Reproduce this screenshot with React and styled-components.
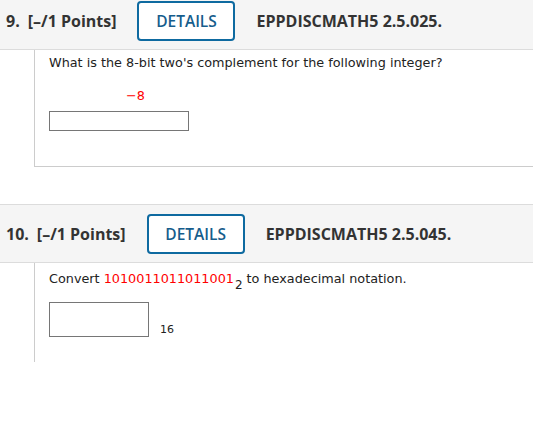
import React from "react";
import styled, { createGlobalStyle } from "styled-components";

const GlobalStyle = createGlobalStyle`
  html, body {
    margin: 0;
    padding: 0;
    background: #fff;
  }
  body {
    font-family: "DejaVu Sans", Verdana, sans-serif;
    color: #222;
  }
`;

const QUESTIONS = [
  {
    number: "9.",
    code: "EPPDISCMATH5 2.5.025.",
    kind: "twos",
  },
  {
    number: "10.",
    code: "EPPDISCMATH5 2.5.045.",
    kind: "hex",
  },
];

export default function App() {
  return (
    <>
      <GlobalStyle />
      <Page>
        {QUESTIONS.map((q, i) => (
          <Question key={q.number} $first={i === 0}>
            <Header>
              <Number>{q.number}</Number>
              <Points>[–/1 Points]</Points>
              <DetailsButton type="button">DETAILS</DetailsButton>
              <Code>{q.code}</Code>
            </Header>
            {q.kind === "twos" ? (
              <Body $bordered $top={5} $bottom={35}>
                <Prompt>What is the 8-bit two's complement for the following integer?</Prompt>
                <Given>−8</Given>
                <WideInput type="text" />
              </Body>
            ) : (
              <Body $top={8} $bottom={25}>
                <Prompt>
                  Convert <Red>1010011011011001</Red>
                  <Sub>2</Sub>to hexadecimal notation.
                </Prompt>
                <AnswerRow>
                  <BoxInput type="text" />
                  <Base>16</Base>
                </AnswerRow>
              </Body>
            )}
          </Question>
        ))}
      </Page>
    </>
  );
}

const Page = styled.div`
  margin-top: -9px;
`;

const Question = styled.section`
  margin-top: ${(p) => (p.$first ? "0" : "37px")};
`;

const Header = styled.div`
  display: flex;
  align-items: center;
  height: 57px;
  padding: 0 5px;
  background: #f5f5f5;
  border-top: 1px solid #dcdcdc;
  border-bottom: 1px solid #dcdcdc;
  font-family: "Open Sans", sans-serif;
  font-weight: 700;
  font-size: 16px;
  color: #333;
  box-sizing: content-box;
`;

const Number = styled.span`
  margin-left: 1px;
  margin-right: 8px;
`;

const Points = styled.span`
  margin-right: 21px;
`;

const DetailsButton = styled.button`
  width: 98px;
  height: 40px;
  border: 2px solid #0e6aa0;
  border-radius: 4px;
  background: #fff;
  color: #165d8c;
  font-family: "Open Sans", sans-serif;
  font-weight: 600;
  font-size: 15.5px;
  padding: 0;
  margin-right: 21px;
`;

const Code = styled.span`
  color: #333;
`;

const Body = styled.div`
  margin-left: 34px;
  border-left: 1px solid #cccccc;
  border-bottom: ${(p) => (p.$bordered ? "1px solid #cccccc" : "none")};
  padding: ${(p) => p.$top}px 0 ${(p) => p.$bottom}px 14px;
  font-size: 12.8px;
`;

const Prompt = styled.div`
  line-height: 16px;
`;

const Red = styled.span`
  color: #f00;
`;

const Sub = styled.sub`
  font-size: 12px;
  line-height: 0;
  margin: 0 4px 0 1px;
  vertical-align: -6px;
`;

const Given = styled.div`
  color: #f00;
  padding-left: 77px;
  margin-top: 17px;
  line-height: 16px;
`;

const WideInput = styled.input`
  display: block;
  width: 140px;
  height: 20px;
  margin-top: 7px;
  box-sizing: border-box;
  border: 1px solid #767676;
  border-radius: 0;
  padding: 0;
`;

const AnswerRow = styled.div`
  display: flex;
  align-items: flex-end;
  margin-top: 15px;
`;

const BoxInput = styled.input`
  width: 100px;
  height: 35px;
  box-sizing: border-box;
  border: 1px solid #767676;
  border-radius: 0;
  padding: 0;
`;

const Base = styled.span`
  font-size: 11px;
  margin-left: 11px;
  margin-bottom: 1px;
`;
